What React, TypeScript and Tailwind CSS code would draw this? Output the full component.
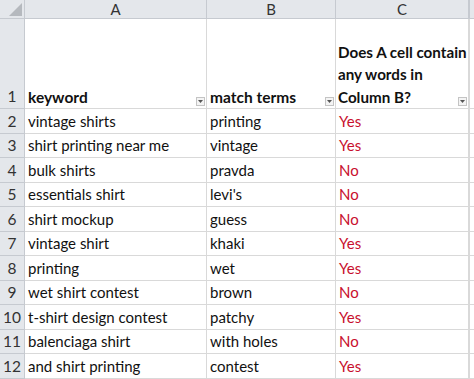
import React from "react";

const rows: [string, string, string][] = [
  ["vintage shirts", "printing", "Yes"],
  ["shirt printing near me", "vintage", "Yes"],
  ["bulk shirts", "pravda", "No"],
  ["essentials shirt", "levi's", "No"],
  ["shirt mockup", "guess", "No"],
  ["vintage shirt", "khaki", "Yes"],
  ["printing", "wet", "Yes"],
  ["wet shirt contest", "brown", "No"],
  ["t-shirt design contest", "patchy", "Yes"],
  ["balenciaga shirt", "with holes", "No"],
  ["and shirt printing", "contest", "Yes"],
];

function Filter() {
  return (
    <div className="absolute right-[1px] bottom-[2px] w-[9px] h-[9px] border border-[#c4c4c4] bg-[#f4f4f4] flex items-center justify-center">
      <svg width="5" height="3" viewBox="0 0 5 3">
        <path d="M0 0 L5 0 L2.5 3 Z" fill="#555" />
      </svg>
    </div>
  );
}

export default function App() {
  const font = { fontFamily: 'Lato, "Open Sans", sans-serif' };
  return (
    <div
      className="w-[474px] h-[379px] overflow-hidden bg-white text-[#111]"
      style={font}
    >
      <div className="grid grid-cols-[25px_182px_129px_133px_1fr] grid-rows-[19px_90px_repeat(11,24.5px)]">
        {/* header row */}
        <div className="relative bg-[#e4e7eb] border-r border-b border-[#c6cad0]">
          <svg className="absolute right-[2px] bottom-[2px]" width="13" height="13" viewBox="0 0 13 13">
            <path d="M13 0 L13 13 L0 13 Z" fill="#b5b9be" />
          </svg>
        </div>
        {["A", "B", "C"].map((l) => (
          <div
            key={l}
            className="bg-[#e4e7eb] border-r border-b border-[#c6cad0] flex items-center justify-center text-[15px] text-[#333]"
          >
            {l}
          </div>
        ))}
        <div className="bg-[#e4e7eb] border-l border-b border-[#c6cad0]" />

        {/* row 1 */}
        <div className="bg-[#e4e7eb] border-r border-b border-[#c6cad0] flex items-end justify-center pb-[1px] text-[15.5px] leading-[22px] text-[#333]">
          1
        </div>
        <div className="relative border-r border-b border-[#d9d9d9] flex items-end pl-[3px] pb-[0px] font-bold text-[15.5px] leading-[22px]">
          keyword
          <Filter />
        </div>
        <div className="relative border-r border-b border-[#d9d9d9] flex items-end pl-[3px] pb-[0px] font-bold text-[15.5px] leading-[22px]">
          match terms
          <Filter />
        </div>
        <div className="relative border-r border-b border-[#d9d9d9] flex items-end pl-[2px] pb-[0px] font-bold text-[15.2px] leading-[22.5px] whitespace-nowrap">
          <div>
            Does A cell contain
            <br />
            any words in
            <br />
            Column B?
          </div>
          <Filter />
        </div>
        <div className="border-l border-b border-[#d9d9d9]" />

        {rows.map(([a, b, c], i) => (
          <React.Fragment key={i}>
            <div className="bg-[#e4e7eb] border-r border-b border-[#c6cad0] flex items-end justify-center pb-[1px] text-[15.5px] leading-[22px] text-[#333]">
              {i + 2}
            </div>
            <div className="border-r border-b border-[#d9d9d9] flex items-end pl-[3px] pb-[1px] text-[15px] leading-[22px] whitespace-nowrap">
              {a}
            </div>
            <div className="border-r border-b border-[#d9d9d9] flex items-end pl-[3px] pb-[1px] text-[15px] leading-[22px] whitespace-nowrap">
              {b}
            </div>
            <div className="border-r border-b border-[#d9d9d9] flex items-end pl-[3px] pb-[1px] text-[15px] leading-[22px] text-[#c8102e]">
              {c}
            </div>
            <div className="border-l border-b border-[#d9d9d9]" />
          </React.Fragment>
        ))}
      </div>
    </div>
  );
}
